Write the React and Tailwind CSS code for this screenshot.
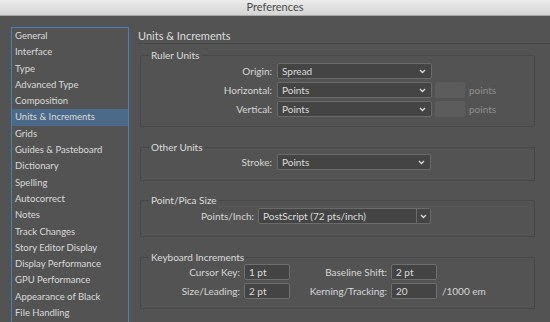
import React from 'react';

const items = [
  'General',
  'Interface',
  'Type',
  'Advanced Type',
  'Composition',
  'Units & Increments',
  'Grids',
  'Guides & Pasteboard',
  'Dictionary',
  'Spelling',
  'Autocorrect',
  'Notes',
  'Track Changes',
  'Story Editor Display',
  'Display Performance',
  'GPU Performance',
  'Appearance of Black',
  'File Handling',
];

function Chevron() {
  return (
    <svg width="7" height="5" viewBox="0 0 7 5" className="shrink-0">
      <polyline points="1,1 3.5,3.5 6,1" fill="none" stroke="#d8d8d8" strokeWidth="1.3" />
    </svg>
  );
}

function Select({ value, width }) {
  return (
    <div
      className={`h-[16px] ${width} flex items-center justify-between pl-[4px] pr-[5px] bg-[#444444] border border-[#6a6a6a] rounded-[2px] text-[#dcdcdc]`}
    >
      <span className="leading-[14px]">{value}</span>
      <Chevron />
    </div>
  );
}

function Group({ title, className, children }) {
  return (
    <fieldset className={`ml-[2px] border border-[#474747] rounded-[2px] ${className}`}>
      <legend className="ml-[8px] px-[2px] text-[10px] leading-[12px] text-[#dcdcdc]">{title}</legend>
      {children}
    </fieldset>
  );
}

function Label({ children, width }) {
  return <span className={`${width} shrink-0 text-right text-[#d6d6d6]`}>{children}</span>;
}

function TextBox({ value }) {
  return (
    <div className="h-[16px] w-[46px] bg-[#444444] border border-[#6e6e6e] rounded-[2px] pl-[4px] leading-[14px] text-[#dcdcdc]">
      {value}
    </div>
  );
}

export default function App() {
  return (
    <div
      className="w-[550px] h-[322px] overflow-hidden bg-[#535353] text-[10px]"
      style={{ fontFamily: 'Lato, "Noto Sans", sans-serif' }}
    >
      <div className="h-[16px] bg-gradient-to-b from-[#ececec] to-[#d4d4d4] border-b border-[#a9a9a9] flex items-center justify-center text-[11px] text-[#4a4a4a]">
        Preferences
      </div>

      <div className="flex">
        <div className="ml-[11px] mt-[11px] w-[118px] h-[320px] border border-[#4a7fbd] shrink-0">
          {items.map((it) => (
            <div
              key={it}
              className={`h-[16.3px] leading-[16.3px] pl-[3px] text-[9.5px] text-[#dadada] ${
                it === 'Units & Increments' ? 'bg-[#4b6988]' : ''
              }`}
            >
              {it}
            </div>
          ))}
        </div>

        <div className="flex-1 ml-[9px] pr-[15px] pt-[12px]">
          <div className="h-[16px] leading-[15px] text-[11px] text-[#dcdcdc] border-b border-[#464646] -mr-[15px]">
            Units &amp; Increments
          </div>

          <Group title="Ruler Units" className="mt-[5px] pt-[2px] pb-[9px]">
            <div className="flex flex-col gap-[3px]">
              <div className="flex items-center gap-[5px]">
                <Label width="w-[131px]">Origin:</Label>
                <Select value="Spread" width="w-[155px]" />
              </div>
              <div className="flex items-center gap-[5px]">
                <Label width="w-[131px]">Horizontal:</Label>
                <Select value="Points" width="w-[155px]" />
                <div className="h-[16px] w-[30px] -ml-[2px] bg-[#5c5c5c] rounded-[2px]" />
                <span className="-ml-[1px] text-[#8f8f8f]">points</span>
              </div>
              <div className="flex items-center gap-[5px]">
                <Label width="w-[131px]">Vertical:</Label>
                <Select value="Points" width="w-[155px]" />
                <div className="h-[16px] w-[30px] -ml-[2px] bg-[#5c5c5c] rounded-[2px]" />
                <span className="-ml-[1px] text-[#8f8f8f]">points</span>
              </div>
            </div>
          </Group>

          <Group title="Other Units" className="mt-[14px] pt-[1px] pb-[10px]">
            <div className="flex items-center gap-[5px]">
              <Label width="w-[131px]">Stroke:</Label>
              <Select value="Points" width="w-[154px]" />
            </div>
          </Group>

          <Group title="Point/Pica Size" className="mt-[13px] pt-[2px] pb-[12px]">
            <div className="flex items-center gap-[4px]">
              <Label width="w-[113px]">Points/Inch:</Label>
              <div className="h-[16px] w-[173px] flex bg-[#444444] border border-[#6a6a6a] rounded-[2px] text-[#dcdcdc]">
                <span className="flex-1 pl-[4px] leading-[14px]">PostScript (72 pts/inch)</span>
                <div className="w-[14px] border-l border-[#6a6a6a] flex items-center justify-center">
                  <Chevron />
                </div>
              </div>
            </div>
          </Group>

          <Group title="Keyboard Increments" className="mt-[14px] pt-[1px] pb-[9px]">
            <div className="flex flex-col gap-[3px]">
              <div className="flex items-center gap-[4px]">
                <Label width="w-[99px]">Cursor Key:</Label>
                <TextBox value="1 pt" />
                <Label width="w-[93px]">Baseline Shift:</Label>
                <TextBox value="2 pt" />
              </div>
              <div className="flex items-center gap-[4px]">
                <Label width="w-[99px]">Size/Leading:</Label>
                <TextBox value="2 pt" />
                <Label width="w-[93px]">Kerning/Tracking:</Label>
                <TextBox value="20" />
                <span className="ml-[1px] text-[#d6d6d6]">/1000 em</span>
              </div>
            </div>
          </Group>
        </div>
      </div>
    </div>
  );
}
